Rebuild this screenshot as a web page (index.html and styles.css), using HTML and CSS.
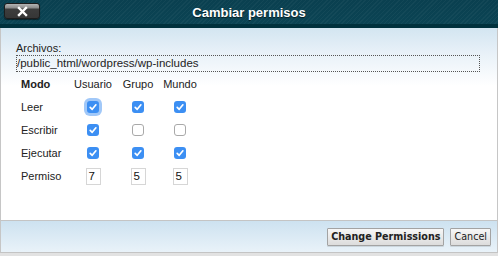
FILE: index.html
```html
<!DOCTYPE html>
<html lang="es">
<head>
<meta charset="utf-8">
<title>Cambiar permisos</title>
<link rel="stylesheet" href="styles.css">
</head>
<body>
<div class="dialog">
  <div class="titlebar">
    <button class="close" type="button" aria-label="Cerrar">
      <svg width="11" height="11" viewBox="0 0 11 11"><path d="M2 2 L9 9 M9 2 L2 9" stroke="#fff" stroke-width="2.4" stroke-linecap="square"/></svg>
    </button>
    <h1 class="title">Cambiar permisos</h1>
  </div>
  <div class="content">
    <div class="label">Archivos:</div>
    <div class="path">/public_html/wordpress/wp-includes</div>
    <div class="perm-grid">
      <div class="head mode">Modo</div>
      <div class="head">Usuario</div>
      <div class="head">Grupo</div>
      <div class="head">Mundo</div>

      <div class="rowlabel">Leer</div>
      <div class="cell"><span class="cb on focus"><svg width="12" height="12" viewBox="0 0 12 12"><path d="M3.2 6.3 L5.2 8.3 L8.9 3.8" fill="none" stroke="#fff" stroke-width="1.7" stroke-linecap="round" stroke-linejoin="round"/></svg></span></div>
      <div class="cell"><span class="cb on"><svg width="12" height="12" viewBox="0 0 12 12"><path d="M3.2 6.3 L5.2 8.3 L8.9 3.8" fill="none" stroke="#fff" stroke-width="1.7" stroke-linecap="round" stroke-linejoin="round"/></svg></span></div>
      <div class="cell"><span class="cb on"><svg width="12" height="12" viewBox="0 0 12 12"><path d="M3.2 6.3 L5.2 8.3 L8.9 3.8" fill="none" stroke="#fff" stroke-width="1.7" stroke-linecap="round" stroke-linejoin="round"/></svg></span></div>

      <div class="rowlabel">Escribir</div>
      <div class="cell"><span class="cb on"><svg width="12" height="12" viewBox="0 0 12 12"><path d="M3.2 6.3 L5.2 8.3 L8.9 3.8" fill="none" stroke="#fff" stroke-width="1.7" stroke-linecap="round" stroke-linejoin="round"/></svg></span></div>
      <div class="cell"><span class="cb"></span></div>
      <div class="cell"><span class="cb"></span></div>

      <div class="rowlabel">Ejecutar</div>
      <div class="cell"><span class="cb on"><svg width="12" height="12" viewBox="0 0 12 12"><path d="M3.2 6.3 L5.2 8.3 L8.9 3.8" fill="none" stroke="#fff" stroke-width="1.7" stroke-linecap="round" stroke-linejoin="round"/></svg></span></div>
      <div class="cell"><span class="cb on"><svg width="12" height="12" viewBox="0 0 12 12"><path d="M3.2 6.3 L5.2 8.3 L8.9 3.8" fill="none" stroke="#fff" stroke-width="1.7" stroke-linecap="round" stroke-linejoin="round"/></svg></span></div>
      <div class="cell"><span class="cb on"><svg width="12" height="12" viewBox="0 0 12 12"><path d="M3.2 6.3 L5.2 8.3 L8.9 3.8" fill="none" stroke="#fff" stroke-width="1.7" stroke-linecap="round" stroke-linejoin="round"/></svg></span></div>

      <div class="rowlabel">Permiso</div>
      <div class="cell"><span class="num">7</span></div>
      <div class="cell"><span class="num">5</span></div>
      <div class="cell"><span class="num">5</span></div>
    </div>
  </div>
  <div class="footer">
    <button class="btn primary" type="button">Change Permissions</button>
    <button class="btn" type="button">Cancel</button>
  </div>
</div>
</body>
</html>
```
FILE: styles.css
```css
html, body {
  margin: 0;
  padding: 0;
}
body {
  width: 498px;
  height: 256px;
  background: #e2e2e2;
  font-family: "Liberation Sans", Arial, sans-serif;
  color: #222;
  overflow: hidden;
}
.dialog {
  width: 498px;
  display: flex;
  flex-direction: column;
}
.titlebar {
  height: 24px;
  border-bottom: 4px solid #00313d;
  background-color: #0c4353;
  background-image: repeating-linear-gradient(135deg, rgba(255,255,255,0.035) 0 1px, rgba(0,0,0,0) 1px 3px), linear-gradient(#0a4050, #0b4454);
  display: flex;
  align-items: center;
  position: relative;
}
.close {
  position: absolute;
  left: 4px;
  top: 3px;
  width: 36px;
  height: 16px;
  padding: 0;
  border: 1px solid #1d1d1d;
  border-radius: 3px;
  background: linear-gradient(#b4b4b4 0, #8a8a8a 4px, #3d3d3d 5px, #363636 100%);
  box-shadow: 0 1px 1px rgba(0,0,0,0.5);
  display: flex;
  align-items: center;
  justify-content: center;
}
.close svg { display: block; margin-top: 1px; }
.title {
  margin: 0;
  flex: 1;
  text-align: center;
  font-size: 13px;
  font-weight: bold;
  color: #fff;
  text-shadow: 0 1px 1px rgba(0,0,0,0.6);
  line-height: 24px;
  padding-top: 1px;
}
.content {
  height: 192px;
  border-left: 1px solid #c6c6c6;
  border-right: 1px solid #c6c6c6;
  background: linear-gradient(#d3e5f1 0, #e8f1f8 25px, #ffffff 58px);
  padding: 14px 0 0 15px;
  box-sizing: border-box;
  font-size: 11px;
}
.label {
  line-height: 13px;
}
.path {
  width: 462px;
  height: 15px;
  border: 1px dotted #555;
  line-height: 15px;
  font-size: 11.5px;
  box-sizing: content-box;
}
.perm-grid {
  display: grid;
  grid-template-columns: 50px 44px 46px 38px;
  grid-auto-rows: 23px;
  align-items: center;
  margin-left: 5px;
}
.head {
  text-align: center;
  font-size: 11px;
}
.head.mode {
  text-align: left;
  font-weight: bold;
}
.rowlabel {
  font-size: 11px;
}
.cell {
  display: flex;
  justify-content: center;
  align-items: center;
}
.cb {
  width: 12px;
  height: 12px;
  box-sizing: border-box;
  border-radius: 3px;
  border: 1px solid #a9a9a9;
  background: #fff;
  display: block;
}
.cb.on {
  border: none;
  background: #3c8ff3;
}
.cb.focus {
  box-shadow: 0 0 0 3px rgba(110, 170, 245, 0.65);
}
.cb svg { display: block; }
.num {
  display: block;
  width: 15px;
  height: 17px;
  box-sizing: border-box;
  border: 1px solid #d6d6d6;
  background: #fff;
  font-size: 11.5px;
  line-height: 15px;
  padding-left: 2px;
  color: #111;
  margin-top: 1px;
}
.footer {
  height: 31px;
  border-top: 1px solid #c4c4c4;
  border-bottom: 1px solid #c4c4c4;
  border-left: 1px solid #c6c6c6;
  border-right: 1px solid #c6c6c6;
  background: linear-gradient(#cde2f0, #e9f2f9);
  display: flex;
  justify-content: flex-end;
  align-items: center;
  gap: 6px;
  padding-right: 6px;
}
.btn {
  height: 18px;
  padding: 0 3px;
  border: 1px solid #a3a3a3;
  border-radius: 1px;
  background: linear-gradient(#f7f7f7, #dcdcdc);
  font-family: "DejaVu Sans", Verdana, sans-serif;
  font-size: 9.6px;
  color: #222;
  line-height: 16px;
  box-shadow: 0 1px 0 rgba(0,0,0,0.1);
}
.btn.primary {
  font-weight: bold;
}
```
